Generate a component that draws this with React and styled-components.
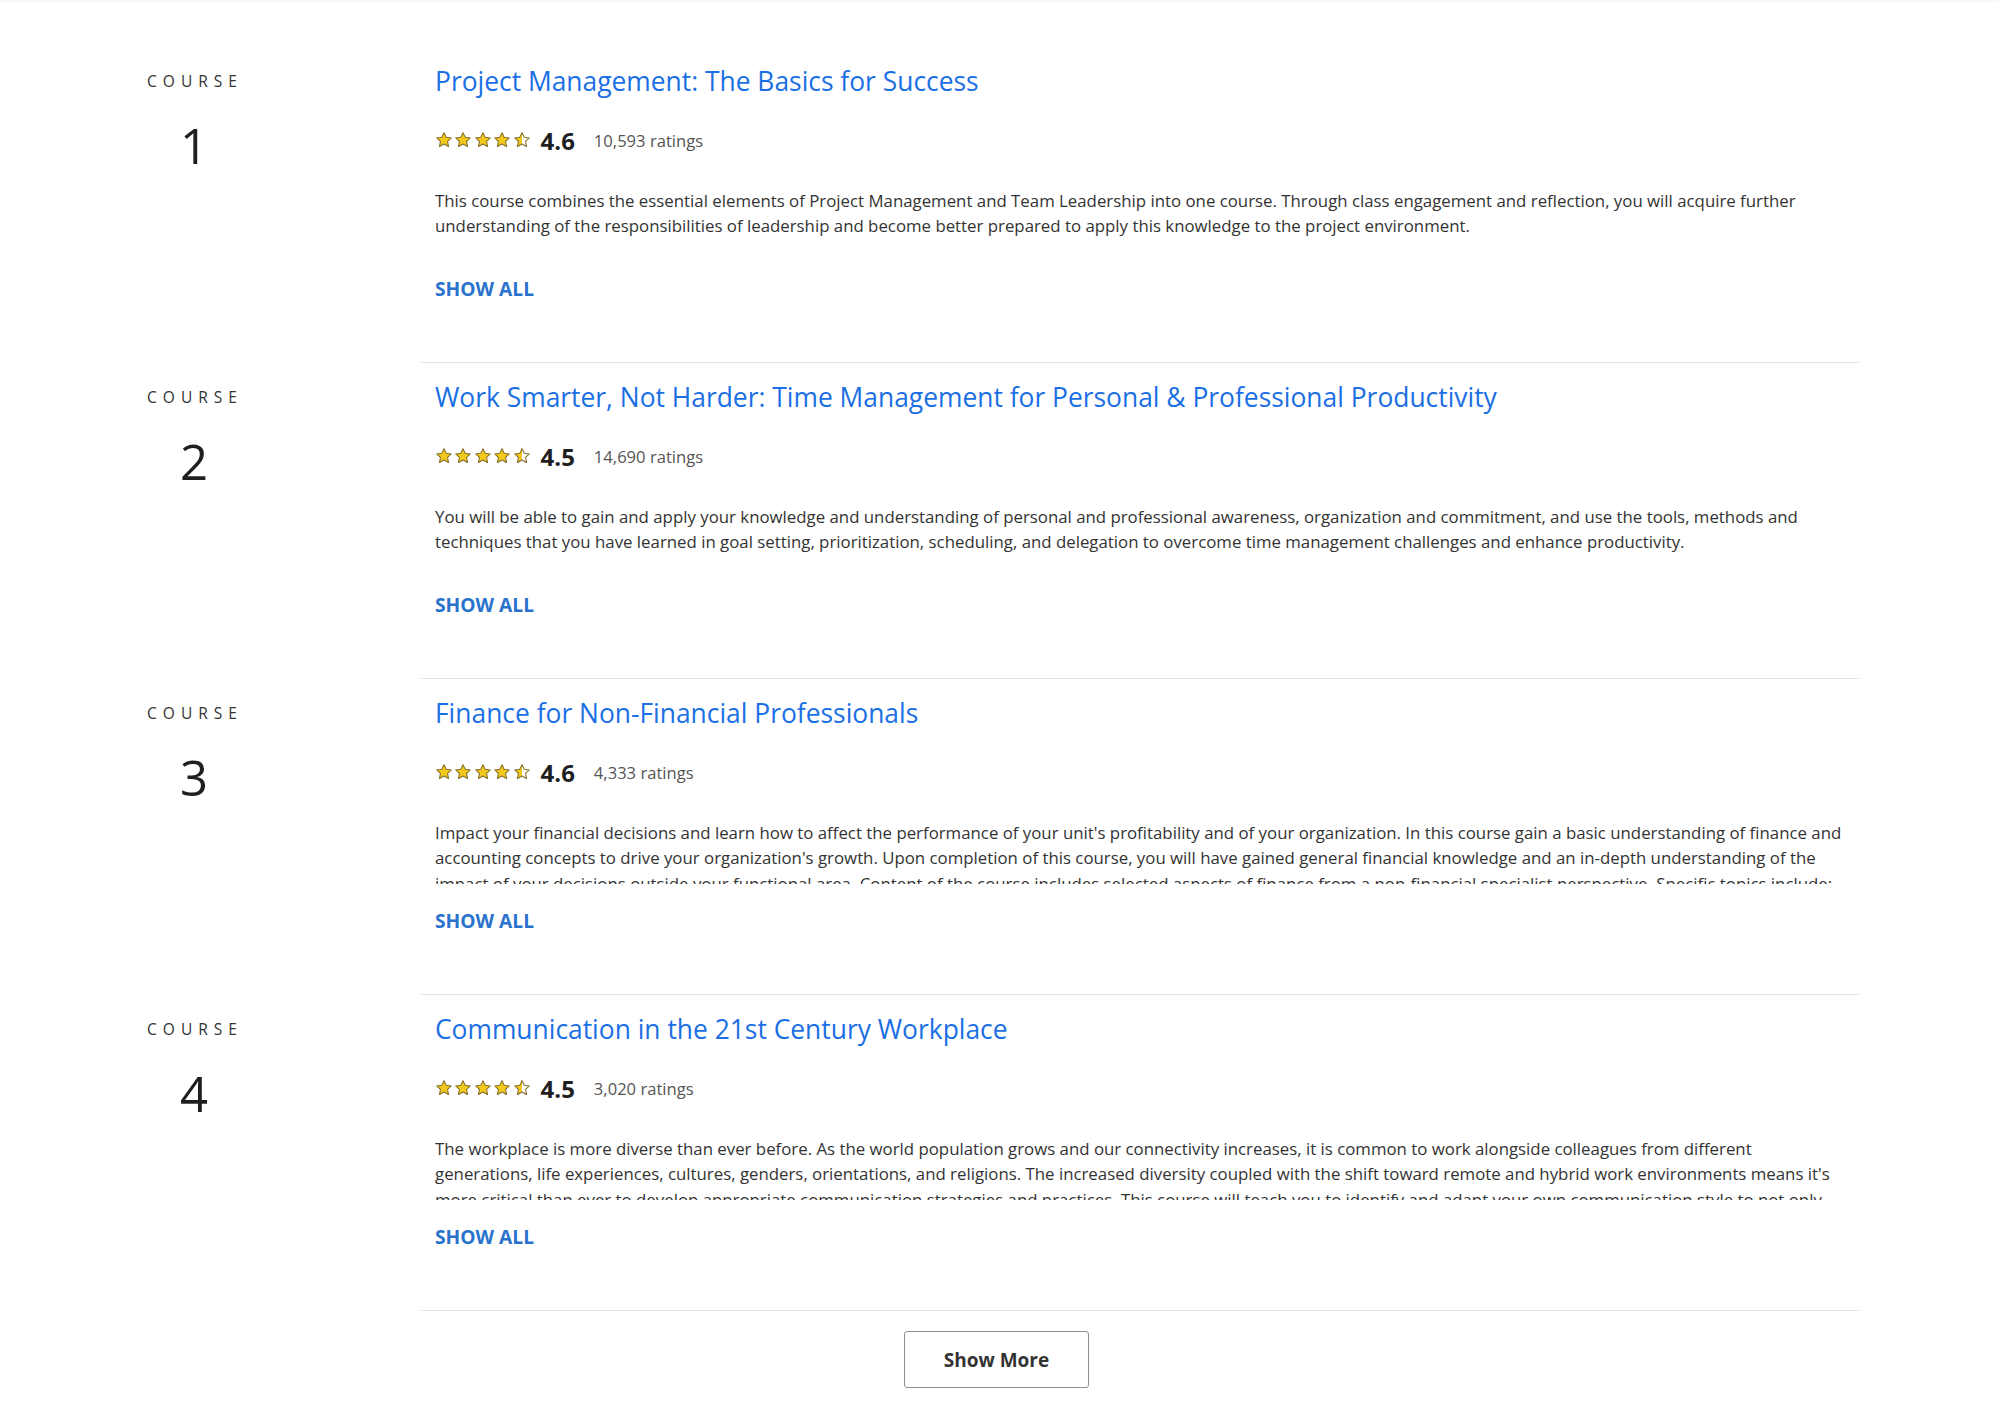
import React, { useId } from "react";
import styled, { createGlobalStyle } from "styled-components";

const GlobalStyle = createGlobalStyle`
  html, body { margin: 0; padding: 0; background: #ffffff; }
  body { font-family: "Open Sans", "Noto Sans", "Liberation Sans", sans-serif; color: #1f1f1f; }
  * { box-sizing: border-box; }
`;

const Page = styled.div`
  min-height: 1408px;
  padding-top: 47px;
  box-shadow: inset 0 3px 3px -2px rgba(0, 0, 0, 0.06);
`;

const CourseRow = styled.section`
  display: grid;
  grid-template-columns: 388px 1438px;
  column-gap: 33px;
`;

const Aside = styled.div`
  padding-top: 18px;
  display: flex;
  flex-direction: column;
  align-items: center;
`;

const CourseLabel = styled.div`
  font-size: 15.5px;
  line-height: 32px;
  letter-spacing: 6px;
  margin-right: -6px;
  margin-left: -4px;
  color: #333333;
`;

const CourseNumber = styled.div`
  margin-top: 24px;
  font-size: 49px;
  line-height: 48px;
  color: #1f1f1f;
`;

const Content = styled.div`
  padding: 18px 14px 61px;
  border-bottom: 1px solid #e4e4e4;
`;

const Title = styled.a`
  display: block;
  font-size: 26.4px;
  line-height: 32px;
  color: #1b6fe4;
  text-decoration: none;
`;

const RatingRow = styled.div`
  margin-top: 31px;
  height: 24px;
  display: flex;
  align-items: center;
`;

const Stars = styled.div`
  display: flex;
  gap: 1.4px;
  margin-right: 10px;
`;

const RatingValue = styled.span`
  font-size: 24px;
  font-weight: 700;
  color: #1f1f1f;
  margin-right: 19px;
`;

const RatingCount = styled.span`
  font-size: 16.6px;
  color: #555555;
`;

const Description = styled.p`
  margin: 36px 0 0;
  height: 64px;
  overflow: hidden;
  font-size: 16.82px;
  line-height: 25.4px;
  color: #333333;
`;

const ShowAll = styled.button`
  display: block;
  margin-top: 25px;
  padding: 0;
  border: 0;
  background: none;
  font-family: inherit;
  font-size: 19.2px;
  line-height: 24px;
  font-weight: 700;
  color: #2a73cc;
  text-transform: uppercase;
  cursor: pointer;
`;

const ButtonBar = styled.div`
  display: flex;
  justify-content: center;
  padding: 20px 6px 0 0;
`;

const ShowMore = styled.button`
  width: 185px;
  height: 57px;
  border: 1px solid #8f8f8f;
  border-radius: 3px;
  background: #ffffff;
  font-family: inherit;
  font-size: 19px;
  font-weight: 700;
  color: #333333;
  cursor: pointer;
`;

const STAR_PATH =
  "M12 2.2l2.95 6.2 6.75.85-4.95 4.7 1.27 6.75L12 17.4l-6.02 3.3 1.27-6.75-4.95-4.7 6.75-.85z";

function Star({ fill }) {
  const id = useId();
  return (
    <svg width="18" height="18" viewBox="0 0 24 24" aria-hidden="true">
      <defs>
        <linearGradient id={id} x1="0" x2="1" y1="0" y2="0">
          <stop offset={fill} stopColor="#f4c91e" />
          <stop offset={fill} stopColor="#ffffff" />
        </linearGradient>
      </defs>
      <path
        d={STAR_PATH}
        fill={`url(#${id})`}
        stroke="#85702a"
        strokeWidth="1.4"
        strokeLinejoin="round"
      />
    </svg>
  );
}

function StarRating({ value }) {
  const stars = [1, 2, 3, 4, 5].map((n) => {
    if (value >= n) return "100%";
    if (value > n - 1) return "50%";
    return "0%";
  });
  return (
    <Stars>
      {stars.map((f, i) => (
        <Star key={i} fill={f} />
      ))}
    </Stars>
  );
}

const courses = [
  {
    title: "Project Management: The Basics for Success",
    rating: 4.6,
    count: "10,593",
    text:
      "This course combines the essential elements of Project Management and Team Leadership into one course. Through class engagement and reflection, you will acquire further understanding of the responsibilities of leadership and become better prepared to apply this knowledge to the project environment.",
  },
  {
    title:
      "Work Smarter, Not Harder: Time Management for Personal & Professional Productivity",
    rating: 4.5,
    count: "14,690",
    text:
      "You will be able to gain and apply your knowledge and understanding of personal and professional awareness, organization and commitment, and use the tools, methods and techniques that you have learned in goal setting, prioritization, scheduling, and delegation to overcome time management challenges and enhance productivity.",
  },
  {
    title: "Finance for Non-Financial Professionals",
    rating: 4.6,
    count: "4,333",
    text:
      "Impact your financial decisions and learn how to affect the performance of your unit's profitability and of your organization. In this course gain a basic understanding of finance and accounting concepts to drive your organization's growth. Upon completion of this course, you will have gained general financial knowledge and an in-depth understanding of the impact of your decisions outside your functional area. Content of the course includes selected aspects of finance from a non-financial specialist perspective. Specific topics include: financial statements, ratio analysis, budgeting and capital investment decisions.",
  },
  {
    title: "Communication in the 21st Century Workplace",
    rating: 4.5,
    count: "3,020",
    text:
      "The workplace is more diverse than ever before. As the world population grows and our connectivity increases, it is common to work alongside colleagues from different generations, life experiences, cultures, genders, orientations, and religions. The increased diversity coupled with the shift toward remote and hybrid work environments means it's more critical than ever to develop appropriate communication strategies and practices. This course will teach you to identify and adapt your own communication style to not only understand others but to be understood.",
  },
];

export default function App() {
  return (
    <>
      <GlobalStyle />
      <Page>
        {courses.map((c, i) => (
          <CourseRow key={c.title}>
            <Aside>
              <CourseLabel>COURSE</CourseLabel>
              <CourseNumber>{i + 1}</CourseNumber>
            </Aside>
            <Content>
              <Title href="#">{c.title}</Title>
              <RatingRow>
                <StarRating value={c.rating} />
                <RatingValue>{c.rating.toFixed(1)}</RatingValue>
                <RatingCount>{c.count} ratings</RatingCount>
              </RatingRow>
              <Description>{c.text}</Description>
              <ShowAll>Show all</ShowAll>
            </Content>
          </CourseRow>
        ))}
        <ButtonBar>
          <ShowMore>Show More</ShowMore>
        </ButtonBar>
      </Page>
    </>
  );
}
